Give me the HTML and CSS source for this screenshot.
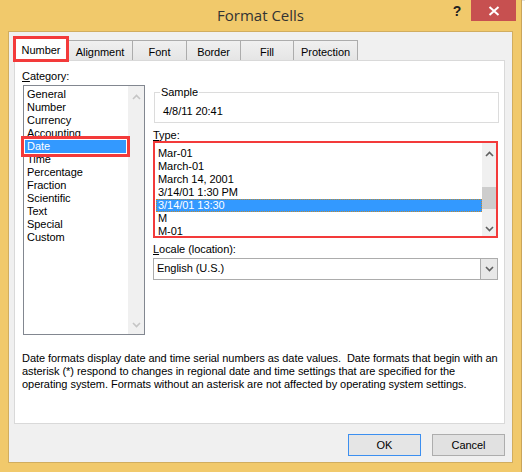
FILE: index.html
```html
<!DOCTYPE html>
<html>
<head>
<meta charset="utf-8">
<link rel="stylesheet" href="styles.css">
</head>
<body>
<div class="screen">
  <div class="window">
    <div class="titlebar">
      <div class="title">Format Cells</div>
      <div class="help">?</div>
      <div class="close">
        <svg width="12" height="10" viewBox="0 0 12 10"><path d="M1.5 1 L10.5 9 M10.5 1 L1.5 9" stroke="#fff" stroke-width="2"/></svg>
      </div>
    </div>
    <div class="client">
      <div class="tabs">
        <div class="tab active w-number">Number</div>
        <div class="tab w-align">Alignment</div>
        <div class="tab w-font">Font</div>
        <div class="tab w-border">Border</div>
        <div class="tab w-fill">Fill</div>
        <div class="tab w-prot">Protection</div>
      </div>
      <div class="panel">
        <div class="columns">
          <div class="left">
            <div class="label"><u>C</u>ategory:</div>
            <div class="catlist">
              <div class="items cat-items">
                <div class="item">General</div>
                <div class="item">Number</div>
                <div class="item">Currency</div>
                <div class="item">Accounting</div>
                <div class="item sel redbox">Date</div>
                <div class="item">Time</div>
                <div class="item">Percentage</div>
                <div class="item">Fraction</div>
                <div class="item">Scientific</div>
                <div class="item">Text</div>
                <div class="item">Special</div>
                <div class="item">Custom</div>
              </div>
              <div class="vscroll cat-scroll">
                <svg class="arrow" width="9" height="6" viewBox="0 0 9 6"><path d="M1 5 L4.5 1.5 L8 5" fill="none" stroke="#c5c5c5" stroke-width="1.6"/></svg>
                <svg class="arrow" width="9" height="6" viewBox="0 0 9 6"><path d="M1 1 L4.5 4.5 L8 1" fill="none" stroke="#c5c5c5" stroke-width="1.6"/></svg>
              </div>
            </div>
          </div>
          <div class="right">
            <fieldset class="sample">
              <legend>Sample</legend>
              <div class="sample-value">4/8/11 20:41</div>
            </fieldset>
            <div class="label type-label"><u>T</u>ype:</div>
            <div class="typelist">
              <div class="items">
                <div class="item">Mar-01</div>
                <div class="item">March-01</div>
                <div class="item">March 14, 2001</div>
                <div class="item">3/14/01 1:30 PM</div>
                <div class="item sel focus">3/14/01 13:30</div>
                <div class="item">M</div>
                <div class="item">M-01</div>
              </div>
              <div class="vscroll type-scroll">
                <svg class="arrow" width="9" height="6" viewBox="0 0 9 6"><path d="M1 5 L4.5 1.5 L8 5" fill="none" stroke="#606060" stroke-width="1.6"/></svg>
                <div class="track"><div class="thumb"></div></div>
                <svg class="arrow" width="9" height="6" viewBox="0 0 9 6"><path d="M1 1 L4.5 4.5 L8 1" fill="none" stroke="#606060" stroke-width="1.6"/></svg>
              </div>
            </div>
            <div class="label locale-label"><u>L</u>ocale (location):</div>
            <div class="combo">
              <div class="combo-text">English (U.S.)</div>
              <div class="combo-btn">
                <svg width="9" height="6" viewBox="0 0 9 6"><path d="M1 1 L4.5 4.5 L8 1" fill="none" stroke="#606060" stroke-width="1.6"/></svg>
              </div>
            </div>
          </div>
        </div>
        <p class="desc">Date formats display date and time serial numbers as date values.&nbsp; Date formats that begin with an<br>asterisk (*) respond to changes in regional date and time settings that are specified for the<br>operating system. Formats without an asterisk are not affected by operating system settings.</p>
      </div>
      <div class="buttons">
        <div class="btn default">OK</div>
        <div class="btn">Cancel</div>
      </div>
    </div>
  </div>
  <div class="behind"></div>
</div>
</body>
</html>
```

FILE: styles.css
```css
* { box-sizing: border-box; }
html, body { margin: 0; padding: 0; }
body {
  font-family: "Liberation Sans", Arial, sans-serif;
  font-size: 11px;
  letter-spacing: -0.05px;
  color: #000;
  background: #fff;
}
.screen {
  display: flex;
  width: 525px;
  height: 472px;
}
.window {
  width: 522px;
  height: 472px;
  background: #f1c96b;
  border-right: 1px solid #c9a55a;
  padding: 0 7px 9px 8px;
  display: flex;
  flex-direction: column;
}
.behind {
  flex: 1;
  background: #fff;
  border-top: 1px solid #e3e3e3;
}
.titlebar {
  height: 31px;
  display: flex;
  align-items: flex-start;
  margin-left: -8px;
  margin-right: -2px;
}
.title {
  flex: 1;
  text-align: center;
  padding-left: 78px;
  padding-top: 5px;
  font-family: "Open Sans", "Liberation Sans", sans-serif;
  font-size: 15px;
  letter-spacing: 0;
  color: #333;
  line-height: 20px;
}
.help {
  width: 28px;
  text-align: center;
  font-weight: bold;
  font-size: 14px;
  color: #222;
  padding-top: 3px;
  line-height: 16px;
}
.close {
  width: 45px;
  height: 21px;
  background: #c75050;
  display: flex;
  align-items: center;
  justify-content: center;
}
.client {
  width: 505px;
  height: 432px;
  background: #f0f0f0;
  border: 1px solid #d1ad5f;
  padding: 5px 7px 0 5px;
  display: flex;
  flex-direction: column;
}
.tabs {
  display: flex;
  align-items: flex-end;
  height: 23px;
}
.tab {
  height: 20px;
  border-top: 1px solid #acacac;
  border-right: 1px solid #acacac;
  background: linear-gradient(#f0f0f0, #e5e5e5);
  text-align: center;
  line-height: 20px;
  padding-top: 1px;
  color: #000;
}
.tab.active {
  height: 24px;
  margin-bottom: -1px;
  background: #fff;
  border: 1px solid #d9d9d9;
  border-bottom: none;
  line-height: 22px;
  padding-top: 1px;
  position: relative;
  z-index: 1;
  outline: 3px solid #f33a3a;
  outline-offset: -2px;
}
.w-number { width: 54px; }
.w-align { width: 65px; }
.w-font { width: 54px; }
.w-border { width: 54px; }
.w-fill { width: 53px; }
.w-prot { width: 64px; }
.panel {
  width: 491px;
  height: 364px;
  background: #fff;
  border: 1px solid #d9d9d9;
  padding: 9px 6px 0 7px;
}
.columns {
  display: flex;
  gap: 8px;
}
.left {
  width: 123px;
}
.label {
  height: 13px;
  line-height: 13px;
}
.catlist {
  margin-top: 2px;
  margin-left: 1px;
  width: 122px;
  height: 250px;
  border: 1px solid #828790;
  display: flex;
  padding: 2px 0 0 1px;
}
.items {
  flex: 1;
  overflow: hidden;
}
.cat-items {
  overflow: visible;
}
.item {
  height: 13px;
  line-height: 13px;
  padding-left: 2px;
  white-space: nowrap;
}
.item.sel {
  background: #3399ff;
  color: #fff;
}
.catlist .item.redbox {
  outline: 3px solid #f33a3a;
  outline-offset: 1px;
  position: relative;
  margin-right: 2px;
}
.vscroll {
  width: 16px;
  background: #f0f0f0;
  display: flex;
  flex-direction: column;
  align-items: center;
  justify-content: space-between;
  padding: 9px 0 6px;
}
.cat-scroll {
  margin-top: -2px;
  padding-top: 8px;
}
.arrow { display: block; }
.right {
  width: 345px;
}
.sample {
  margin: 16px 0 0 1px;
  width: 345px;
  border: 1px solid #dcdcdc;
  padding: 0 8px 4px 8px;
  min-width: 0;
}
.sample legend {
  padding: 0 1px;
  margin-left: -3px;
  line-height: 13px;
}
.sample-value {
  margin-top: 6px;
  line-height: 13px;
}
.type-label {
  margin-top: 6px;
}
.typelist {
  margin-top: -1px;
  width: 345px;
  height: 97px;
  border: 2px solid #f33a3a;
  display: flex;
  padding: 3px 0 0 1px;
  overflow: hidden;
}
.typelist .items {
  padding-top: 1px;
}
.typelist .item.focus {
  outline: 1px dotted #c08a30;
  outline-offset: -1px;
}
.type-scroll {
  width: 14px;
  margin-top: -3px;
  padding: 8px 0 4px;
  justify-content: flex-start;
}
.track {
  flex: 1;
  width: 100%;
  padding-top: 30px;
}
.thumb {
  height: 22px;
  background: #cdcdcd;
}
.locale-label {
  margin-top: 5px;
}
.combo {
  margin-top: 2px;
  width: 345px;
  height: 22px;
  border: 1px solid #acacac;
  display: flex;
  background: #fff;
}
.combo-text {
  flex: 1;
  line-height: 19px;
  padding-left: 3px;
}
.combo-btn {
  width: 17px;
  border-left: 1px solid #acacac;
  background: #e8e8e8;
  display: flex;
  align-items: center;
  justify-content: center;
}
.desc {
  margin: 17px 0 0 0;
  line-height: 13px;
  white-space: nowrap;
}
.buttons {
  display: flex;
  justify-content: flex-end;
  gap: 11px;
  margin-top: 10px;
}
.btn {
  width: 73px;
  height: 22px;
  border: 1px solid #adadad;
  background: #e1e1e1;
  text-align: center;
  line-height: 20px;
}
.btn.default {
  border-color: #3c8ff0;
  background: #e5e5e5;
}
```
